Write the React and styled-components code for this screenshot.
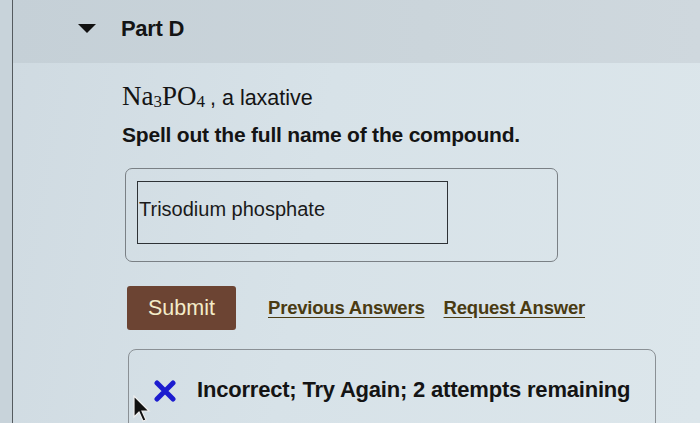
import React from "react";
import styled, { createGlobalStyle } from "styled-components";

const GlobalStyle = createGlobalStyle`
  html, body {
    margin: 0;
    padding: 0;
  }
  body {
    width: 700px;
    height: 423px;
    overflow: hidden;
    font-family: "Liberation Sans", Arial, sans-serif;
    color: #141414;
    background: #d2dde3;
  }
`;

const Page = styled.div`
  position: relative;
  width: 700px;
  height: 423px;
  overflow: hidden;
  display: flex;
  background: linear-gradient(100deg, #cfdae1 0%, #d7e2e8 45%, #dce6eb 100%);
`;

const Gutter = styled.div`
  width: 12px;
  flex: none;
  border-right: 1.5px solid #555b5f;
  background: #c8d3da;
`;

const Main = styled.div`
  flex: 1;
  display: flex;
  flex-direction: column;
`;

const Header = styled.div`
  flex: none;
  height: 63px;
  display: flex;
  align-items: center;
  gap: 25px;
  padding: 0 0 6px 65px;
  box-sizing: border-box;
  background: linear-gradient(90deg, #c5d0d7 0%, #cbd5db 60%, #cfd8de 100%);
`;

const Caret = styled.span`
  width: 0;
  height: 0;
  border-left: 9px solid transparent;
  border-right: 9px solid transparent;
  border-top: 9px solid #111;
`;

const PartTitle = styled.h2`
  margin: 0;
  font-size: 22px;
  font-weight: bold;
  letter-spacing: -0.3px;
`;

const Body = styled.div`
  flex: none;
  padding: 18px 0 0 109px;
  display: flex;
  flex-direction: column;
`;

const Formula = styled.div`
  display: flex;
  align-items: baseline;
  height: 34px;
  font-size: 21.5px;
`;

const Chem = styled.span`
  font-family: "Liberation Serif", "DejaVu Serif", serif;
  font-size: 27px;
  margin-right: 5px;
  sub {
    font-size: 17px;
    vertical-align: -2px;
  }
`;

const Prompt = styled.p`
  margin: 8px 0 0;
  font-size: 21px;
  font-weight: bold;
  letter-spacing: -0.2px;
`;

const AnswerCard = styled.div`
  margin: 21px 0 0 3px;
  width: 433px;
  height: 94px;
  box-sizing: border-box;
  border: 1.5px solid #7a8085;
  border-radius: 7px;
  padding: 12px 0 0 11px;
`;

const AnswerInput = styled.div`
  width: 311px;
  height: 63px;
  box-sizing: border-box;
  border: 1.5px solid #2e3236;
  padding: 16px 0 0 1px;
  font-size: 20px;
  color: #1a1a1a;
`;

const Actions = styled.div`
  margin: 24px 0 0 5px;
  display: flex;
  align-items: center;
`;

const SubmitButton = styled.button`
  width: 109px;
  height: 44px;
  border: none;
  border-radius: 3px;
  background: #6c4433;
  color: #f4ecc9;
  font-family: "Liberation Sans", Arial, sans-serif;
  font-size: 21.5px;
  margin-right: 32px;
  cursor: pointer;
`;

const TextLink = styled.a`
  font-size: 18.5px;
  font-weight: bold;
  color: #4a3b12;
  text-decoration: underline;
  text-underline-offset: 3px;
  margin-right: ${(p) => p.$gap || 0}px;
  letter-spacing: -0.2px;
`;

const Feedback = styled.div`
  margin: 19px 0 0 6px;
  width: 528px;
  height: 90px;
  box-sizing: border-box;
  border: 1.5px solid #8a9095;
  border-radius: 8px;
  display: flex;
  align-items: flex-start;
  gap: 20px;
  padding: 27px 0 0 24px;
`;

const FeedbackText = styled.span`
  font-size: 22px;
  font-weight: bold;
  letter-spacing: -0.2px;
`;

const Cursor = styled.svg`
  position: absolute;
  left: 133px;
  top: 395px;
`;

const CrossIcon = () => (
  <svg width="24" height="22" viewBox="0 0 24 22" style={{ marginTop: 3 }}>
    <path
      d="M4 3 L20 19 M20 3 L4 19"
      stroke="#1c1ccf"
      strokeWidth="5"
      strokeLinecap="round"
    />
  </svg>
);

export default function App() {
  return (
    <>
      <GlobalStyle />
      <Page>
        <Gutter />
        <Main>
          <Header>
            <Caret />
            <PartTitle>Part D</PartTitle>
          </Header>
          <Body>
            <Formula>
              <Chem>
                Na<sub>3</sub>PO<sub>4</sub>
              </Chem>
              , a laxative
            </Formula>
            <Prompt>Spell out the full name of the compound.</Prompt>
            <AnswerCard>
              <AnswerInput>Trisodium phosphate</AnswerInput>
            </AnswerCard>
            <Actions>
              <SubmitButton>Submit</SubmitButton>
              <TextLink $gap={19}>Previous Answers</TextLink>
              <TextLink>Request Answer</TextLink>
            </Actions>
            <Feedback>
              <CrossIcon />
              <FeedbackText>Incorrect; Try Again; 2 attempts remaining</FeedbackText>
            </Feedback>
          </Body>
        </Main>
        <Cursor width="18" height="28" viewBox="0 0 18 28">
          <path
            d="M1 1 L1 22 L6 17 L10 26 L13 25 L9 16 L16 16 Z"
            fill="#111"
            stroke="#eee"
            strokeWidth="1.2"
          />
        </Cursor>
      </Page>
    </>
  );
}
